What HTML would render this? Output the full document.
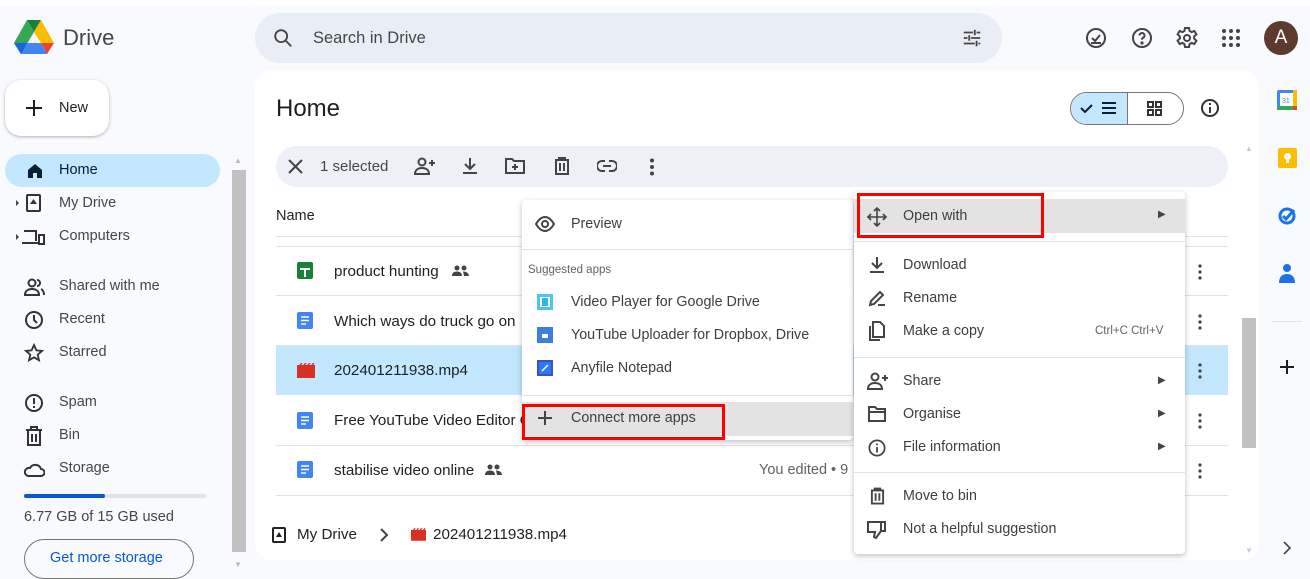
<!DOCTYPE html>
<html><head><style>
*{box-sizing:border-box;margin:0;padding:0}
body{width:1310px;height:572px;background:#f8fafd;font-family:"Liberation Sans",sans-serif;color:#1f1f1f;position:relative;overflow:hidden;font-size:14px}
.a{position:absolute}
.t{position:absolute;white-space:nowrap}
svg{position:absolute}
.nav{font-size:14.5px;color:#444746}
.mi{font-size:14.3px;color:#3c4043}
.fr{font-size:15.2px;color:#1f1f1f}
.line{position:absolute;height:1px;background:#e3e3e3}
</style></head><body>
<div class="a" style="left:0;top:0;width:1310px;height:6px;background:#fff"></div>
<svg style="left:14px;top:20px" width="40" height="34" viewBox="0 0 40 34">
<polygon points="13,0 27,0 20,12" fill="#188038"/>
<polygon points="13,0 0,23 7,34 20,12" fill="#34a853"/>
<polygon points="27,0 40,23 27,23 20,12" fill="#fbbc04"/>
<polygon points="0,23 7,34 33,34 27,23" fill="#4285f4"/>
<polygon points="27,23 40,23 33,34" fill="#ea4335"/>
<polygon points="0,23 7,34 13,23" fill="#1967d2"/>
</svg>
<div class="t" style="left:63px;top:25px;font-size:22px;color:#444746">Drive</div>
<div class="a" style="left:255px;top:13px;width:747px;height:50px;border-radius:25px;background:#e9eef6"></div>
<svg style="left:272px;top:27px" width="22" height="22" viewBox="0 0 24 24"><circle cx="10" cy="10" r="6.5" fill="none" stroke="#444" stroke-width="2"/><path d="M15 15l6 6" stroke="#444" stroke-width="2"/></svg>
<div class="t" style="left:313px;top:29px;font-size:16.5px;color:#444746">Search in Drive</div>
<svg style="left:961px;top:27px" width="22" height="22" viewBox="0 0 24 24" stroke="#444" stroke-width="2"><path d="M3 6h10M17 6h4M3 12h4M11 12h10M3 18h12M19 18h2M15 3v6M9 9v6M17 15v6"/></svg>
<svg style="left:1084px;top:26px" width="24" height="24" viewBox="0 0 24 24" fill="none" stroke="#444" stroke-width="2"><circle cx="12" cy="12" r="9"/><path d="M8 12l3 3 5-6M7 17h10"/></svg>
<svg style="left:1130px;top:26px" width="24" height="24" viewBox="0 0 24 24" fill="none" stroke="#444" stroke-width="2"><circle cx="12" cy="12" r="9"/><path d="M9.5 9.5a2.5 2.5 0 1 1 3.5 2.3c-.8.4-1 1-1 2"/><circle cx="12" cy="17" r=".6" fill="#444"/></svg>
<svg style="left:1175px;top:26px" width="24" height="24" viewBox="0 0 24 24" fill="none" stroke="#444" stroke-width="2"><path d="M10 2h4l.6 3 2 1.1 2.8-1.1 2 3.4-2.3 2v2.2l2.3 2-2 3.4-2.8-1.1-2 1.1-.6 3h-4l-.6-3-2-1.1-2.8 1.1-2-3.4 2.3-2v-2.2l-2.3-2 2-3.4 2.8 1.1 2-1.1z"/><circle cx="12" cy="12" r="3"/></svg>
<svg style="left:1221px;top:28px" width="20" height="20" viewBox="0 0 20 20" fill="#444"><circle cx="3" cy="3" r="2"/><circle cx="10" cy="3" r="2"/><circle cx="17" cy="3" r="2"/><circle cx="3" cy="10" r="2"/><circle cx="10" cy="10" r="2"/><circle cx="17" cy="10" r="2"/><circle cx="3" cy="17" r="2"/><circle cx="10" cy="17" r="2"/><circle cx="17" cy="17" r="2"/></svg>
<div class="a" style="left:1264px;top:21px;width:34px;height:34px;border-radius:50%;background:#5d3a2e;color:#fff;font-size:19px;text-align:center;line-height:34px">A</div>
<div class="a" style="left:5px;top:80px;width:104px;height:56px;border-radius:16px;background:#fff;box-shadow:0 1px 3px rgba(0,0,0,.3)"></div>
<svg style="left:25px;top:99px" width="18" height="18" viewBox="0 0 18 18" stroke="#1f1f1f" stroke-width="2"><path d="M9 1v16M1 9h16"/></svg>
<div class="t" style="left:59px;top:100px;font-size:14.5px;color:#1f1f1f">New</div>
<div class="a" style="left:5px;top:154px;width:215px;height:33px;border-radius:17px;background:#c2e7ff"></div>
<svg style="left:27px;top:163px" width="16" height="16" viewBox="0 0 16 16"><path d="M1 7L8 1l7 6v8H10v-5H6v5H1z" fill="#0b1f33"/></svg>
<div class="t nav" style="left:59px;top:162px;color:#001d35">Home</div>
<svg style="left:14px;top:193px" width="34" height="20" viewBox="0 0 34 20"><path d="M2 7l3 3-3 3z" fill="#444"/><rect x="13" y="2" width="13" height="16" rx="1" fill="none" stroke="#333" stroke-width="2"/><path d="M16 11h7l-3.5-5z" fill="#333"/></svg>
<div class="t nav" style="left:59px;top:195px">My Drive</div>
<svg style="left:14px;top:227px" width="34" height="20" viewBox="0 0 34 20"><path d="M2 7l3 3-3 3z" fill="#444"/><path d="M10 4h12v10M8 16h16" stroke="#333" stroke-width="2" fill="none"/><rect x="25" y="8" width="5" height="9" fill="none" stroke="#333" stroke-width="2"/></svg>
<div class="t nav" style="left:59px;top:228px">Computers</div>
<svg style="left:24px;top:277px" width="22" height="20" viewBox="0 0 22 20" fill="none" stroke="#333" stroke-width="2"><circle cx="8" cy="6" r="3.5"/><path d="M1 18c0-4 3-6 7-6s7 2 7 6z"/><path d="M13 3a3 3 0 0 1 0 6M17 12c2 1 3 3 3 6"/></svg>
<div class="t nav" style="left:59px;top:278px">Shared with me</div>
<svg style="left:24px;top:310px" width="20" height="20" viewBox="0 0 20 20" fill="none" stroke="#333" stroke-width="2"><circle cx="10" cy="10" r="8"/><path d="M10 5v5l3 3"/></svg>
<div class="t nav" style="left:59px;top:311px">Recent</div>
<svg style="left:24px;top:343px" width="20" height="20" viewBox="0 0 20 20" fill="none" stroke="#333" stroke-width="1.8"><path d="M10 2l2.4 5.4 5.6.5-4.3 3.8 1.3 5.6L10 14.3 5 17.3l1.3-5.6L2 7.9l5.6-.5z"/></svg>
<div class="t nav" style="left:59px;top:344px">Starred</div>
<svg style="left:24px;top:393px" width="20" height="20" viewBox="0 0 20 20" fill="none" stroke="#333" stroke-width="2"><circle cx="10" cy="10" r="8"/><path d="M10 5v6M10 13v2"/></svg>
<div class="t nav" style="left:59px;top:394px">Spam</div>
<svg style="left:25px;top:426px" width="18" height="20" viewBox="0 0 18 20" fill="none" stroke="#333" stroke-width="2"><path d="M1 4h16M6 4V1h6v3M3 4v15h12V4M7 8v8M11 8v8"/></svg>
<div class="t nav" style="left:59px;top:427px">Bin</div>
<svg style="left:23px;top:461px" width="22" height="16" viewBox="0 0 22 16" fill="none" stroke="#333" stroke-width="2"><path d="M5 15h13a3.5 3.5 0 0 0 0-7 6 6 0 0 0-11-1A4 4 0 0 0 5 15z"/></svg>
<div class="t nav" style="left:59px;top:460px">Storage</div>
<div class="a" style="left:24px;top:494px;width:182px;height:4px;background:#e3e3e3;border-radius:2px"></div>
<div class="a" style="left:24px;top:494px;width:81px;height:4px;background:#0b57d0;border-radius:2px"></div>
<div class="t nav" style="left:24px;top:509px">6.77 GB of 15 GB used</div>
<div class="a" style="left:24px;top:539px;width:170px;height:40px;border:1px solid #747775;border-radius:20px"></div>
<div class="t" style="left:50px;top:550px;font-size:14.5px;color:#0b57d0">Get more storage</div>
<div class="a" style="left:232px;top:170px;width:14px;height:382px;background:#c1c1c1"></div>
<div class="t" style="left:234px;top:156px;font-size:8px;color:#bbb">▲</div>
<div class="t" style="left:234px;top:560px;font-size:8px;color:#bbb">▼</div>
<div class="a" style="left:255px;top:70px;width:1004px;height:490px;background:#fff;border-radius:16px"></div>
<div class="t" style="left:276px;top:95px;font-size:24px;color:#1f1f1f">Home</div>
<div class="a" style="left:1070px;top:92px;width:114px;height:33px;border:1px solid #747775;border-radius:17px;overflow:hidden"><div style="width:57px;height:100%;background:#c2e7ff;border-right:1px solid #747775"></div></div>
<svg style="left:1080px;top:100px" width="40" height="16" viewBox="0 0 40 16" fill="none" stroke="#0b1f33" stroke-width="2"><path d="M1 8l4 4 7-7M22 3h14M22 8h14M22 13h14"/></svg>
<svg style="left:1147px;top:101px" width="15" height="15" viewBox="0 0 15 15" fill="none" stroke="#333" stroke-width="2"><rect x="1" y="1" width="5" height="5"/><rect x="9" y="1" width="5" height="5"/><rect x="1" y="9" width="5" height="5"/><rect x="9" y="9" width="5" height="5"/></svg>
<svg style="left:1200px;top:98px" width="20" height="20" viewBox="0 0 20 20" fill="none" stroke="#333" stroke-width="2"><circle cx="10" cy="10" r="8"/><path d="M10 9v6M10 5v2"/></svg>
<div class="a" style="left:276px;top:146px;width:952px;height:41px;border-radius:21px;background:#edf1f7"></div>
<svg style="left:288px;top:159px" width="15" height="15" viewBox="0 0 15 15" stroke="#444" stroke-width="2"><path d="M1 1l13 13M14 1L1 14"/></svg>
<div class="t" style="left:320px;top:158px;font-size:15px;color:#444746">1 selected</div>
<svg style="left:414px;top:157px" width="22" height="18" viewBox="0 0 22 18" fill="none" stroke="#444" stroke-width="2"><circle cx="8" cy="5" r="3.5"/><path d="M1 17c0-4 3-6 7-6s7 2 7 6zM18 3v6M15 6h6"/></svg>
<svg style="left:462px;top:157px" width="16" height="18" viewBox="0 0 16 18" fill="none" stroke="#444" stroke-width="2"><path d="M8 1v11M3 7l5 5 5-5M1 16h14"/></svg>
<svg style="left:505px;top:157px" width="20" height="18" viewBox="0 0 20 18" fill="none" stroke="#444" stroke-width="2"><path d="M1 2h6l2 2h10v12H1zM10 7v6M7 10h6"/></svg>
<svg style="left:554px;top:157px" width="16" height="18" viewBox="0 0 16 18" fill="none" stroke="#444" stroke-width="2"><path d="M1 3h14M5 3V1h6v2M2 3v14h12V3M6 6v8M10 6v8"/></svg>
<svg style="left:597px;top:160px" width="20" height="12" viewBox="0 0 20 12" fill="none" stroke="#444" stroke-width="2"><path d="M8 1H5a5 5 0 0 0 0 10h3M12 1h3a5 5 0 0 1 0 10h-3M6 6h8"/></svg>
<svg style="left:649px;top:158px" width="6" height="18" viewBox="0 0 6 18" fill="#444"><circle cx="3" cy="2.5" r="2"/><circle cx="3" cy="9" r="2"/><circle cx="3" cy="15.5" r="2"/></svg>
<div class="t" style="left:276px;top:208px;font-size:14.5px;color:#1f1f1f">Name</div>
<div class="line" style="left:276px;top:236px;width:952px"></div>
<div class="line" style="left:276px;top:246px;width:952px"></div>
<div class="line" style="left:276px;top:295px;width:952px"></div>
<div class="line" style="left:276px;top:345px;width:952px"></div>
<div class="a" style="left:276px;top:346px;width:952px;height:49px;background:#c2e7ff"></div>
<div class="line" style="left:276px;top:445px;width:952px"></div>
<div class="line" style="left:276px;top:495px;width:952px"></div>
<div class="a" style="left:297px;top:262px;width:16px;height:17px;background:#188038;border-radius:2px"></div>
<svg style="left:297px;top:262px" width="16" height="17"><path d="M3 7h10M8 7v8" stroke="#fff" stroke-width="2"/></svg>
<div class="t fr" style="left:334px;top:263px">product hunting</div>
<svg style="left:452px;top:265px" width="17" height="11" viewBox="0 0 17 11" fill="#444"><circle cx="5" cy="3" r="2.5"/><circle cx="12" cy="3" r="2.5"/><path d="M0 11c0-3 2-4.5 5-4.5s5 1.5 5 4.5zM11 6.5c3 0 6 1.5 6 4.5h-5z"/></svg>
<svg style="left:297px;top:312px" width="16" height="17" viewBox="0 0 16 17"><rect width="16" height="17" rx="2" fill="#4285f4"/><path d="M4 5h8M4 8.5h8M4 12h5" stroke="#fff" stroke-width="1.6"/></svg>
<div class="t fr" style="left:334px;top:313px">Which ways do truck go on</div>
<svg style="left:297px;top:363px" width="18" height="15" viewBox="0 0 18 15"><rect y="2" width="18" height="13" fill="#d93025"/><path d="M3 2l2-2M7 2l2-2M11 2l2-2M15 2l2-2" stroke="#d93025" stroke-width="1.5"/></svg>
<div class="t fr" style="left:334px;top:362px">202401211938.mp4</div>
<svg style="left:297px;top:412px" width="16" height="17" viewBox="0 0 16 17"><rect width="16" height="17" rx="2" fill="#4285f4"/><path d="M4 5h8M4 8.5h8M4 12h5" stroke="#fff" stroke-width="1.6"/></svg>
<div class="t fr" style="left:334px;top:412px">Free YouTube Video Editor O</div>
<svg style="left:297px;top:461px" width="16" height="17" viewBox="0 0 16 17"><rect width="16" height="17" rx="2" fill="#4285f4"/><path d="M4 5h8M4 8.5h8M4 12h5" stroke="#fff" stroke-width="1.6"/></svg>
<div class="t fr" style="left:334px;top:462px">stabilise video online</div>
<svg style="left:485px;top:464px" width="17" height="11" viewBox="0 0 17 11" fill="#444"><circle cx="5" cy="3" r="2.5"/><circle cx="12" cy="3" r="2.5"/><path d="M0 11c0-3 2-4.5 5-4.5s5 1.5 5 4.5zM11 6.5c3 0 6 1.5 6 4.5h-5z"/></svg>
<div class="t" style="left:759px;top:462px;font-size:14.5px;color:#5f6368">You edited • 9</div>
<svg style="left:1197px;top:264px" width="6" height="16" fill="#444"><circle cx="3" cy="2" r="1.6"/><circle cx="3" cy="8" r="1.6"/><circle cx="3" cy="14" r="1.6"/></svg>
<svg style="left:1197px;top:314px" width="6" height="16" fill="#444"><circle cx="3" cy="2" r="1.6"/><circle cx="3" cy="8" r="1.6"/><circle cx="3" cy="14" r="1.6"/></svg>
<svg style="left:1197px;top:363px" width="6" height="16" fill="#444"><circle cx="3" cy="2" r="1.6"/><circle cx="3" cy="8" r="1.6"/><circle cx="3" cy="14" r="1.6"/></svg>
<svg style="left:1197px;top:413px" width="6" height="16" fill="#444"><circle cx="3" cy="2" r="1.6"/><circle cx="3" cy="8" r="1.6"/><circle cx="3" cy="14" r="1.6"/></svg>
<svg style="left:1197px;top:463px" width="6" height="16" fill="#444"><circle cx="3" cy="2" r="1.6"/><circle cx="3" cy="8" r="1.6"/><circle cx="3" cy="14" r="1.6"/></svg>
<div class="a" style="left:1242px;top:318px;width:14px;height:130px;background:#c1c1c1"></div>
<div class="t" style="left:1245px;top:144px;font-size:8px;color:#ccc">▲</div>
<div class="t" style="left:1245px;top:546px;font-size:8px;color:#ccc">▼</div>
<svg style="left:272px;top:527px" width="14" height="16" viewBox="0 0 14 16"><rect x="1" y="1" width="12" height="14" rx="1" fill="none" stroke="#222" stroke-width="2"/><path d="M4 10h6L7 5z" fill="#222"/></svg>
<div class="t fr" style="left:297px;top:526px">My Drive</div>
<svg style="left:379px;top:528px" width="10" height="14"><path d="M2 1l6 6-6 6" stroke="#444" stroke-width="2" fill="none"/></svg>
<svg style="left:411px;top:528px" width="15" height="13" viewBox="0 0 18 15"><rect y="2" width="18" height="13" fill="#d93025"/><path d="M3 2l2-2M7 2l2-2M11 2l2-2M15 2l2-2" stroke="#d93025" stroke-width="1.5"/></svg>
<div class="t fr" style="left:433px;top:526px">202401211938.mp4</div>
<svg style="left:1277px;top:90px" width="20" height="20" viewBox="0 0 20 20"><rect width="20" height="20" rx="2" fill="#4285f4"/><rect x="3" y="3" width="14" height="14" fill="#fff"/><rect x="0" y="16" width="16" height="4" fill="#34a853"/><rect x="16" y="0" width="4" height="16" fill="#fbbc04"/><rect x="16" y="16" width="4" height="4" fill="#ea4335"/><text x="5" y="13" font-size="7" fill="#4285f4" font-family="Liberation Sans">31</text></svg>
<svg style="left:1278px;top:148px" width="19" height="20" viewBox="0 0 19 20"><rect width="19" height="20" rx="2" fill="#fbbc04"/><circle cx="9.5" cy="8.5" r="3.5" fill="#fff"/><rect x="8" y="12" width="3" height="3" fill="#fff"/></svg>
<svg style="left:1277px;top:205px" width="20" height="20" viewBox="0 0 20 20" fill="none" stroke="#1a73e8" stroke-width="3"><circle cx="10" cy="11" r="7"/><path d="M6 11l3 3 8-9"/></svg>
<svg style="left:1279px;top:263px" width="16" height="20" viewBox="0 0 16 20" fill="#1a73e8"><circle cx="8" cy="5" r="4"/><path d="M0 20c0-6 3-9 8-9s8 3 8 9z"/></svg>
<div class="line" style="left:1272px;top:321px;width:30px;background:#e3e3e3"></div>
<svg style="left:1279px;top:359px" width="16" height="16" stroke="#1f1f1f" stroke-width="2"><path d="M8 1v14M1 8h14"/></svg>
<svg style="left:1282px;top:541px" width="10" height="14"><path d="M2 1l6 6-6 6" stroke="#444" stroke-width="1.6" fill="none"/></svg>
<div class="a" style="left:522px;top:200px;width:331px;height:240px;background:#fff;box-shadow:0 2px 6px rgba(0,0,0,.25);border-radius:4px"></div>
<svg style="left:535px;top:216px" width="20" height="16" viewBox="0 0 20 16" fill="none" stroke="#444" stroke-width="2"><path d="M1 8c3-5 6-7 9-7s6 2 9 7c-3 5-6 7-9 7s-6-2-9-7z"/><circle cx="10" cy="8" r="3"/></svg>
<div class="t mi" style="left:571px;top:216px">Preview</div>
<div class="line" style="left:522px;top:249px;width:331px"></div>
<div class="t" style="left:528px;top:264px;font-size:11.5px;color:#5f6368">Suggested apps</div>
<svg style="left:537px;top:294px" width="16" height="16"><rect width="16" height="16" fill="#4fc3f7"/><rect x="3" y="3" width="10" height="10" fill="#fff"/><rect x="5" y="4" width="6" height="8" fill="#29b6f6"/></svg>
<div class="t mi" style="left:571px;top:294px">Video Player for Google Drive</div>
<svg style="left:537px;top:327px" width="16" height="16"><rect width="16" height="16" fill="#3f7fdc"/><rect x="5" y="7" width="6" height="4" fill="#fff"/></svg>
<div class="t mi" style="left:571px;top:327px">YouTube Uploader for Dropbox, Drive</div>
<svg style="left:537px;top:360px" width="16" height="16"><rect width="16" height="16" fill="#3f51b5"/><rect x="2" y="2" width="12" height="12" fill="#2979ff"/><path d="M5 11l6-6" stroke="#fff" stroke-width="1.5"/></svg>
<div class="t mi" style="left:571px;top:360px">Anyfile Notepad</div>
<div class="line" style="left:522px;top:395px;width:331px"></div>
<div class="a" style="left:522px;top:402px;width:331px;height:34px;background:#e3e3e3"></div>
<svg style="left:538px;top:411px" width="14" height="14" stroke="#444" stroke-width="2"><path d="M7 0v14M0 7h14"/></svg>
<div class="t mi" style="left:571px;top:410px">Connect more apps</div>
<div class="a" style="left:522px;top:404px;width:203px;height:36px;border:3px solid #f00"></div>
<div class="a" style="left:854px;top:192px;width:331px;height:362px;background:#fff;box-shadow:0 2px 6px rgba(0,0,0,.25);border-radius:4px"></div>
<div class="a" style="left:854px;top:199px;width:331px;height:34px;background:#e3e3e3"></div>
<svg style="left:867px;top:207px" width="20" height="20" viewBox="0 0 20 20" fill="none" stroke="#444" stroke-width="1.6"><path d="M10 1v18M1 10h18M7 4l3-3 3 3M7 16l3 3 3-3M4 7l-3 3 3 3M16 7l3 3-3 3"/></svg>
<div class="t mi" style="left:903px;top:208px">Open with</div>
<div class="t" style="left:1158px;top:209px;font-size:10px;color:#444">▶</div>
<div class="a" style="left:857px;top:193px;width:187px;height:45px;border:3px solid #f00"></div>
<div class="line" style="left:854px;top:241px;width:331px"></div>
<svg style="left:869px;top:256px" width="16" height="18" viewBox="0 0 16 18" fill="none" stroke="#444" stroke-width="2"><path d="M8 1v11M3 7l5 5 5-5M1 16h14"/></svg>
<div class="t mi" style="left:903px;top:257px">Download</div>
<svg style="left:868px;top:289px" width="18" height="18" viewBox="0 0 18 18" fill="none" stroke="#444" stroke-width="2"><path d="M2 16l1-4 9-9 3 3-9 9zM10 16h7"/></svg>
<div class="t mi" style="left:903px;top:290px">Rename</div>
<svg style="left:868px;top:321px" width="18" height="20" viewBox="0 0 18 20" fill="none" stroke="#444" stroke-width="2"><path d="M5 1h7l4 4v11H5zM2 5v14h10"/></svg>
<div class="t mi" style="left:903px;top:323px">Make a copy</div>
<div class="t" style="left:1095px;top:325px;font-size:11.5px;color:#5f6368">Ctrl+C Ctrl+V</div>
<div class="line" style="left:854px;top:357px;width:331px"></div>
<svg style="left:867px;top:372px" width="22" height="18" viewBox="0 0 22 18" fill="none" stroke="#444" stroke-width="2"><circle cx="8" cy="5" r="3.5"/><path d="M1 17c0-4 3-6 7-6s7 2 7 6zM18 3v6M15 6h6"/></svg>
<div class="t mi" style="left:903px;top:373px">Share</div>
<div class="t" style="left:1158px;top:375px;font-size:10px;color:#444">▶</div>
<svg style="left:868px;top:406px" width="20" height="16" viewBox="0 0 20 16" fill="none" stroke="#444" stroke-width="2"><path d="M1 1h6l2 2h8v12H1zM1 6h17"/></svg>
<div class="t mi" style="left:903px;top:406px">Organise</div>
<div class="t" style="left:1158px;top:408px;font-size:10px;color:#444">▶</div>
<svg style="left:868px;top:439px" width="18" height="18" viewBox="0 0 20 20" fill="none" stroke="#444" stroke-width="2"><circle cx="10" cy="10" r="8.5"/><path d="M10 9v6M10 5v2"/></svg>
<div class="t mi" style="left:903px;top:439px">File information</div>
<div class="t" style="left:1158px;top:441px;font-size:10px;color:#444">▶</div>
<div class="line" style="left:854px;top:472px;width:331px"></div>
<svg style="left:870px;top:487px" width="15" height="18" viewBox="0 0 16 18" fill="none" stroke="#444" stroke-width="2"><path d="M1 3h14M5 3V1h6v2M2 3v14h12V3M6 6v8M10 6v8"/></svg>
<div class="t mi" style="left:903px;top:488px">Move to bin</div>
<svg style="left:867px;top:520px" width="20" height="20" viewBox="0 0 20 20" fill="none" stroke="#444" stroke-width="2"><path d="M1 2h13v9l-5 7-2-1 1-5H1z M14 2h4v9h-4"/></svg>
<div class="t mi" style="left:903px;top:521px">Not a helpful suggestion</div>
</body></html>
